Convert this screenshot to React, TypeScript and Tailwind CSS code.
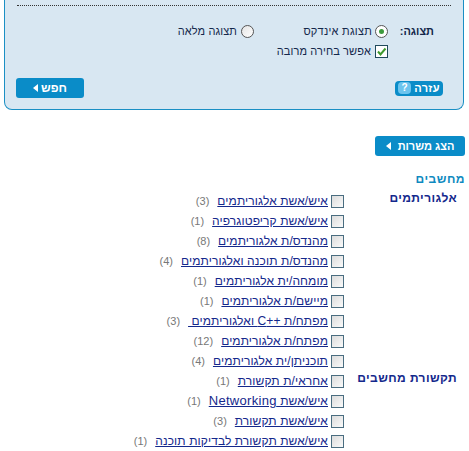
const groups = [
  {
    title: 'אלגוריתמים',
    items: [
      ['איש/אשת אלגוריתמים', 3],
      ['איש/אשת קריפטוגרפיה', 1],
      ['מהנדס/ת אלגוריתמים', 8],
      ['מהנדס/ת תוכנה ואלגוריתמים', 4],
      ['מומחה/ית אלגוריתמים', 1],
      ['מיישם/ת אלגוריתמים', 1],
      ['מפתח/ת ++C ואלגוריתמים ', 3],
      ['מפתח/ת אלגוריתמים', 12],
      ['תוכניתן/ית אלגוריתמים', 4],
    ],
  },
  {
    title: 'תקשורת מחשבים',
    items: [
      ['אחראי/ת תקשורת', 1],
      ['איש/אשת Networking', 1],
      ['איש/אשת תקשורת', 3],
      ['איש/אשת תקשורת לבדיקות תוכנה', 1],
    ],
  },
] as const

function Arrow() {
  return <span className="h-0 w-0 border-y-[4px] border-r-[5px] border-y-transparent border-r-white" />
}

function Row({ label, count }: { label: string; count: number }) {
  const latin = label.endsWith('Networking')
  return (
    <div className="flex h-5 items-center">
      <span className="h-[13px] w-[13px] shrink-0 border border-[#4a6d80] bg-gradient-to-br from-[#dcdcdc] to-[#fafafa]" />
      <a className="mr-[3px] whitespace-pre text-[12px] leading-4 tracking-[0.1px] text-[#14288c] underline" href="#">
        {latin ? (
          <>
            {label.replace('Networking', '')}
            <span className="text-[13px] tracking-[0.3px]">Networking</span>
          </>
        ) : (
          label
        )}
      </a>
      <span className="mr-[8px] text-[11px] text-[#777777]">({count})</span>
    </div>
  )
}

export default function App() {
  return (
    <div dir="rtl" className="h-[451px] w-[469px] overflow-hidden bg-white font-['Liberation_Sans',sans-serif] text-[#14284b]">
      {/* Search panel */}
      <div className="mr-[5px] ml-[4px] h-[110px] rounded-b-lg border-x border-b border-[#1a8fc4] bg-[#d8e7f2] px-[11px] pt-[5px]">
        <div className="mx-[1px] border-t border-dotted border-[#333333]" />
        <div className="mt-[17px] flex items-start">
          <span className="w-[64px] pr-[18px] text-[11px] leading-4 font-bold">תצוגה:</span>
          <div className="w-[134px]">
            <label className="flex h-4 items-center gap-[3px] text-[11px] tracking-[0.25px]">
              <span className="flex h-[13px] w-[13px] items-center justify-center rounded-full border border-[#555555] bg-white">
                <span className="h-[5px] w-[5px] rounded-full bg-[#3c9a3c]" />
              </span>
              תצוגת אינדקס
            </label>
            <label className="mt-[4px] flex h-4 items-center gap-[4px] whitespace-nowrap text-[11px] tracking-[0.1px]">
              <span className="flex h-[13px] w-[13px] shrink-0 items-center justify-center border border-[#1f4a5c] bg-white">
                <svg width="11" height="11" viewBox="0 0 11 11">
                  <path d="M2 5.5 L4.5 8.5 L9.5 2.5" fill="none" stroke="#3f9a2e" strokeWidth="2" />
                </svg>
              </span>
              אפשר בחירה מרובה
            </label>
          </div>
          <label className="flex h-4 items-center gap-[4px] text-[11px] tracking-[0.1px]">
            <span className="h-[13px] w-[13px] rounded-full border border-[#555555] bg-gradient-to-br from-[#e4e4e4] to-white" />
            תצוגה מלאה
          </label>
        </div>
        <div className="mt-[19px] flex items-center justify-between">
          <button className="mr-[9px] flex h-[15px] w-[48px] items-center justify-center gap-[3px] rounded-sm bg-[#0a8cc8] text-[11px] font-bold tracking-[0.3px] text-white">
            עזרה
            <span className="flex h-[12px] w-[13px] items-center justify-center rounded-sm bg-[#6cc4ee] text-[10px] leading-none">?</span>
          </button>
          <button className="flex h-5 w-[68px] items-center justify-center gap-[3px] rounded-[3px] bg-[#0a8cc8] text-[12px] font-bold text-white">
            חפש
            <Arrow />
          </button>
        </div>
      </div>

      {/* Results */}
      <div className="mt-[26px] pr-[4px]">
        <button className="flex h-5 w-[90px] items-center justify-center gap-[7px] rounded-[3px] bg-[#0a8cc8] text-[11px] font-bold text-white">
          הצג משרות
          <Arrow />
        </button>
        <h2 className="mt-[16px] h-[14px] text-[12px] leading-[14px] font-bold tracking-[0.5px] text-[#0f8ac0]">מחשבים</h2>
        {groups.map((group, i) => (
          <div key={group.title} className={i === 0 ? 'mt-[5px] flex' : 'flex'}>
            <h3 className="w-[121px] shrink-0 pr-[8px] text-[12px] leading-[14px] font-bold tracking-[0.4px] whitespace-nowrap text-[#14288c]">
              {group.title}
            </h3>
            <div>
              {group.items.map(([label, count]) => (
                <Row key={label} label={label} count={count} />
              ))}
            </div>
          </div>
        ))}
      </div>
    </div>
  )
}
